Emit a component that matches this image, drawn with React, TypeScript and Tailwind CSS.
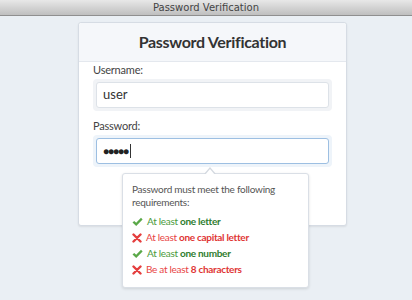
import React from 'react'

const REQS = [
  { ok: true, pre: 'At least ', bold: 'one letter' },
  { ok: false, pre: 'At least ', bold: 'one capital letter' },
  { ok: true, pre: 'At least ', bold: 'one number' },
  { ok: false, pre: 'Be at least ', bold: '8 characters' },
]

function Check() {
  return (
    <svg width="11" height="10" viewBox="0 0 11 10" className="shrink-0">
      <path d="M0.5 5.5 L2.2 3.9 L4.2 5.8 L9 0.8 L10.6 2.4 L4.2 8.9 Z" fill="#5aa848" />
    </svg>
  )
}

function Cross() {
  return (
    <svg width="10" height="10" viewBox="0 0 10 10" className="shrink-0">
      <path d="M1.5 1.5 L8.5 8.5 M8.5 1.5 L1.5 8.5" stroke="#e53e3e" strokeWidth="2.4" strokeLinecap="round" />
    </svg>
  )
}

export default function App() {
  return (
    <div className="w-[412px] h-[300px] overflow-hidden bg-[#eaeff4] relative" style={{ fontFamily: 'Lato, "Open Sans", sans-serif' }}>
      {/* window title bar */}
      <div className="h-4 bg-gradient-to-b from-[#e8e8e8] to-[#bfbfbf] border-b border-[#8f8f8f] flex items-center justify-center">
        <span className="text-[10px] text-[#444] leading-none" style={{ fontFamily: '"DejaVu Sans", sans-serif' }}>Password Verification</span>
      </div>

      <div className="ml-[78px] mt-[6px] w-[269px] bg-white border border-[#d6dce4] rounded-[3px] shadow-[0_1px_2px_rgba(0,0,0,0.08)]">
        <div className="h-[39px] bg-[#f5f7fa] border-b border-[#e4e8ee] rounded-t-[3px] flex items-center justify-center">
          <h1 className="text-[16px] font-bold text-[#333] tracking-[-0.3px]">Password Verification</h1>
        </div>

        <div className="px-[14px] pb-[58px]">
          <label className="block text-[11px] tracking-[-0.2px] text-[#444] leading-[14px] pt-[1px]">Username:</label>
          <div className="mt-[2px] rounded-[4px] bg-[#f1f3f6] p-[3px]">
            <div className="h-[26px] bg-white border border-[#dde2e8] rounded-[3px] flex items-center px-[6px] text-[13px] text-[#333]">user</div>
          </div>

          <label className="block text-[11px] tracking-[-0.2px] text-[#444] leading-[14px] mt-[8px]">Password:</label>
          <div className="relative mt-[2px] rounded-[4px] bg-[#eef4fa] p-[3px]">
            <div className="h-[26px] bg-white border border-[#9dbfe2] rounded-[3px] flex items-center px-[6px] text-[#222]">
              <span className="tracking-[-1px] text-[10px]">●●●●●</span>
              <span className="ml-[2px] w-px h-[14px] bg-[#333]" />
            </div>

            {/* requirements tooltip */}
            <div className="absolute left-[29px] top-[38px] w-[187px] h-[115px] bg-white border border-[#dadfe6] rounded-[3px] shadow-[0_1px_3px_rgba(0,0,0,0.12)] px-[9px] pt-[9px] z-10">
              <div className="absolute -top-[7px] left-[81px] w-0 h-0 border-l-[6px] border-r-[6px] border-b-[7px] border-l-transparent border-r-transparent border-b-[#d4d9e0]" />
              <div className="absolute -top-[5px] left-[82px] w-0 h-0 border-l-[5px] border-r-[5px] border-b-[6px] border-l-transparent border-r-transparent border-b-white" />
              <p className="text-[10px] tracking-[-0.25px] leading-[13px] text-[#555]">Password must meet the following requirements:</p>
              <ul className="mt-[6px] flex flex-col gap-[3px]">
                {REQS.map((r, i) => (
                  <li key={i} className={`flex items-center gap-[4px] text-[10px] tracking-[-0.3px] leading-[13px] ${r.ok ? 'text-[#4a9a3c]' : 'text-[#e84545]'}`}>
                    {r.ok ? <Check /> : <Cross />}
                    <span>
                      {r.pre}
                      <b className={r.ok ? 'text-[#2f7d2f]' : 'text-[#e03535]'}>{r.bold}</b>
                    </span>
                  </li>
                ))}
              </ul>
            </div>
          </div>
        </div>
      </div>
    </div>
  )
}
